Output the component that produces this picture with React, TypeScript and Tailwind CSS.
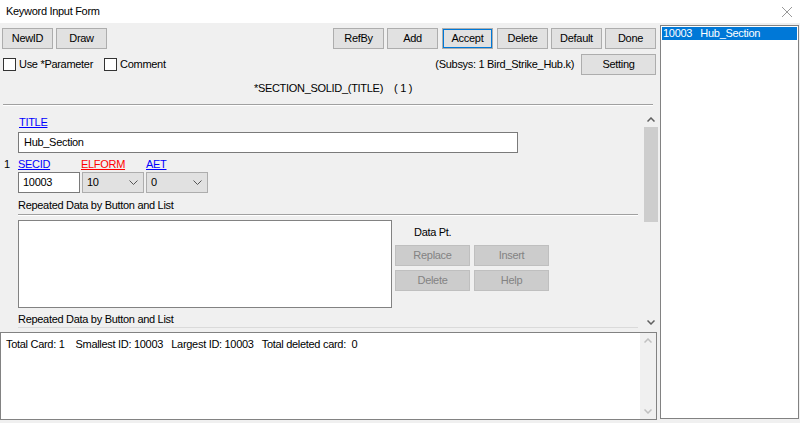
import React from "react";

const FONT = { fontFamily: '"Liberation Sans", Arial, sans-serif' };

const BTN =
  "h-[21px] w-[51px] bg-[#e1e1e1] border border-[#adadad] text-[11px] text-black flex items-center justify-center";
const BTN_OFF =
  "h-[21px] w-[75px] bg-[#cccccc] border border-[#bfbfbf] text-[11px] text-[#838383] flex items-center justify-center";
const TXT = "text-[11px] leading-[14px] h-[14px]";

function Check({ label }: { label: string }) {
  return (
    <label className="flex items-center gap-[3px] text-[11px]">
      <span className="w-[13px] h-[13px] border border-[#333333] bg-white" />
      {label}
    </label>
  );
}

function Select({ value }: { value: string }) {
  return (
    <div className="h-[21px] w-[62px] bg-[#e1e1e1] border border-[#adadad] flex items-center justify-between pl-[4px] pr-[5px] text-[11px]">
      <span>{value}</span>
      <svg width="9" height="6" viewBox="0 0 9 6">
        <path d="M0.5 0.5 L4.5 4.5 L8.5 0.5" fill="none" stroke="#555" strokeWidth="1" />
      </svg>
    </div>
  );
}

function Chevron({ up, color }: { up?: boolean; color: string }) {
  return (
    <svg width="8" height="5" viewBox="0 0 8 5">
      <path
        d={up ? "M0.5 4.5 L4 1 L7.5 4.5" : "M0.5 0.5 L4 4 L7.5 0.5"}
        fill="none"
        stroke={color}
        strokeWidth="1.5"
      />
    </svg>
  );
}

export default function App() {
  return (
    <div
      className="w-[800px] h-[423px] bg-[#f0f0f0] flex flex-col overflow-hidden text-black tracking-[-0.3px]"
      style={FONT}
    >
      {/* title bar */}
      <div className="h-[23px] bg-white flex items-center justify-between pl-[6px] pr-[8px] shrink-0">
        <span className="text-[11px]">Keyword Input Form</span>
        <svg width="10" height="10" viewBox="0 0 10 10">
          <path d="M0 0 L10 10 M10 0 L0 10" stroke="#999" strokeWidth="1" />
        </svg>
      </div>

      <div className="flex flex-1 min-h-0">
        {/* left column */}
        <div className="w-[658px] flex flex-col">
          <div className="flex justify-between items-center pl-[2px] pr-[2px] mt-[5px]">
            <div className="flex gap-[3px]">
              <div className={BTN}>NewID</div>
              <div className={BTN}>Draw</div>
            </div>
            <div className="flex gap-[3px]">
              <div className={BTN}>RefBy</div>
              <div className={BTN}>Add</div>
              <div className={`${BTN} border-[#0078d7] shadow-[inset_0_0_0_1px_#0078d7] ml-[1px] mr-[1px]`}>Accept</div>
              <div className={BTN}>Delete</div>
              <div className={BTN}>Default</div>
              <div className={BTN}>Done</div>
            </div>
          </div>

          <div className="flex justify-between items-center pl-[3px] pr-[2px] mt-[5px]">
            <div className="flex gap-[11px]">
              <Check label="Use *Parameter" />
              <Check label="Comment" />
            </div>
            <div className="flex items-center gap-[7px]">
              <span className="text-[11px]">(Subsys: 1 Bird_Strike_Hub.k)</span>
              <div className={`${BTN} w-[75px]`}>Setting</div>
            </div>
          </div>

          <div className={`${TXT} text-center pl-[8px] mt-[6px] whitespace-pre`}>*SECTION_SOLID_(TITLE)    ( 1 )</div>

          <div className="ml-[3px] mr-[5px] mt-[9px] border-t border-[#a0a0a0] border-b border-b-white" />

          {/* scroll panel */}
          <div className="flex h-[218px] mt-[6px]">
            <div className="flex-1 overflow-hidden flex flex-col">
              <a className={`${TXT} text-[#0000ff] underline ml-[19px] mt-[3px] self-start`}>TITLE</a>
              <div className="ml-[18px] mt-[3px] w-[500px] h-[21px] shrink-0 bg-white border border-[#7a7a7a] text-[11px] flex items-center pl-[5px]">
                Hub_Section
              </div>
              <div className={`flex mt-[4px] ${TXT}`}>
                <span className="w-[18px] pl-[4px]">1</span>
                <span className="w-[63px]"><span className="text-[#0000ff] underline">SECID</span></span>
                <span className="w-[65px]"><span className="text-[#ff0000] underline">ELFORM</span></span>
                <span className="text-[#0000ff] underline">AET</span>
              </div>
              <div className="flex ml-[18px] mt-[1px] gap-[2px] shrink-0">
                <div className="w-[62px] h-[21px] bg-white border border-[#7a7a7a] text-[11px] flex items-center pl-[4px]">10003</div>
                <Select value="10" />
                <Select value="0" />
              </div>
              <span className={`${TXT} ml-[18px] mt-[5px]`}>Repeated Data by Button and List</span>
              <div className="ml-[18px] mr-[5px] mt-[2px] border-t border-[#a0a0a0] border-b border-b-white" />
              <div className="flex ml-[18px] mt-[4px] shrink-0">
                <div className="w-[374px] h-[88px] bg-white border border-[#828282]" />
                <div className="flex flex-col ml-[3px]">
                  <span className={`${TXT} ml-[19px] mt-[5px]`}>Data Pt.</span>
                  <div className="flex gap-[4px] mt-[6px]">
                    <div className={BTN_OFF}>Replace</div>
                    <div className={BTN_OFF}>Insert</div>
                  </div>
                  <div className="flex gap-[4px] mt-[4px]">
                    <div className={BTN_OFF}>Delete</div>
                    <div className={BTN_OFF}>Help</div>
                  </div>
                </div>
              </div>
              <span className={`${TXT} ml-[18px] mt-[4px] shrink-0`}>Repeated Data by Button and List</span>
              <div className="ml-[18px] mr-[5px] mt-[1px] border-t border-[#dadada]" />
            </div>
            {/* scrollbar */}
            <div className="w-[15px] flex flex-col items-center bg-[#f0f0f0]">
              <div className="h-[15px] flex items-center justify-center">
                <Chevron up color="#606060" />
              </div>
              <div className="w-[14px] h-[95px] bg-[#cdcdcd]" />
              <div className="flex-1" />
              <div className="h-[15px] flex items-center justify-center">
                <Chevron color="#606060" />
              </div>
            </div>
          </div>

          {/* bottom text area */}
          <div className="mt-[2px] h-[88px] bg-white border border-[#828282] flex mr-[1px]">
            <div className="flex-1 text-[11px] pl-[5px] pt-[3px] whitespace-pre">
              Total Card: 1    Smallest ID: 10003   Largest ID: 10003   Total deleted card:  0
            </div>
            <div className="w-[16px] bg-[#f0f0f0] flex flex-col justify-between items-center py-[5px]">
              <Chevron up color="#c0c0c0" />
              <Chevron color="#c0c0c0" />
            </div>
          </div>
        </div>

        {/* right list */}
        <div className="ml-[2px] mt-[2px] mb-[4px] w-[139px] bg-white border border-[#828282] p-[1px]">
          <div className="bg-[#0078d7] text-white text-[11px] h-[13px] leading-[13px] pl-[1px] whitespace-pre">10003   Hub_Section</div>
        </div>
      </div>
    </div>
  );
}
